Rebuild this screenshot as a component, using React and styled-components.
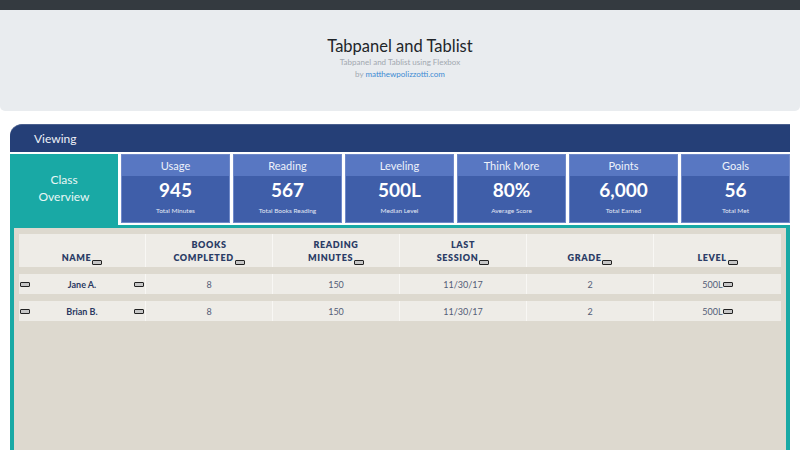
import React from "react";
import styled, { createGlobalStyle } from "styled-components";

const GlobalStyle = createGlobalStyle`
  body {
    margin: 0;
    background: #fff;
    font-family: Lato, "Open Sans", sans-serif;
  }
`;

const TopBar = styled.div`
  height: 10px;
  background: #343a40;
`;

const Jumbo = styled.header`
  background: #e9ecef;
  border-radius: 0 0 5px 5px;
  padding: 26px 0 31px;
  text-align: center;
`;

const Title = styled.h1`
  margin: 0;
  font-size: 16.5px;
  line-height: 20px;
  font-weight: 400;
  color: #212529;
`;

const Lead = styled.p`
  margin: 0;
  font-size: 8px;
  line-height: 12px;
  font-weight: 400;
  color: #a2a8af;
`;

const ByLink = styled.a`
  color: #3d8bd3;
  text-decoration: none;
`;

const Viewer = styled.section`
  margin: 13px 10px 0;
`;

const ViewingBar = styled.div`
  height: 27px;
  line-height: 27px;
  padding-left: 24px;
  background: #253f77;
  border-top: 1px solid #4a5f8e;
  border-top-left-radius: 12px;
  color: #eef1f7;
  font-size: 12px;
`;

const TabList = styled.div`
  display: flex;
  gap: 3px;
  height: 71px;
  margin-top: 2px;
`;

const ActiveTab = styled.div`
  width: 108px;
  background: #19a9a5;
  color: #e9f7f6;
  font-size: 12px;
  line-height: 17px;
  display: flex;
  align-items: center;
  justify-content: center;
  text-align: center;
  padding-bottom: 4px;
  box-sizing: border-box;
`;

const Tile = styled.div`
  flex: 1;
  display: flex;
  flex-direction: column;
  margin-bottom: 2px;
  border: 1px solid #6f89c9;
  background: #3f5ea9;
  color: #fff;
  text-align: center;
`;

const TileHead = styled.div`
  height: 21px;
  line-height: 21px;
  background: #5877c2;
  font-size: 11px;
  color: #eef2fb;
`;

const TileValue = styled.div`
  margin-top: 2px;
  font-size: 19px;
  line-height: 24px;
  font-weight: 700;
`;

const TileCaption = styled.div`
  margin-top: 4px;
  font-size: 6.5px;
  line-height: 10px;
  color: #e3e8f4;
`;

const Panel = styled.div`
  box-sizing: border-box;
  min-height: 226px;
  border: 4px solid #19a9a5;
  border-top-width: 3px;
  border-bottom: 0;
  background: #ddd9cf;
  padding: 6px 5px 0;
`;

const Grid = styled.div`
  display: grid;
  grid-template-columns: repeat(6, 1fr);
  background: #eeece7;
  height: ${(p) => p.$h}px;
  margin-bottom: 7px;
`;

const HeadCell = styled.div`
  display: flex;
  align-items: flex-end;
  justify-content: center;
  padding-bottom: 2px;
  border-right: 1px solid #f8f7f4;
  font-size: 9px;
  line-height: 13px;
  font-weight: 800;
  letter-spacing: 0.6px;
  text-transform: uppercase;
  color: #2b3c66;
  text-align: center;
  &:last-child {
    border-right: none;
  }
`;

const Cell = styled.div`
  display: flex;
  align-items: center;
  justify-content: ${(p) => (p.$spread ? "space-between" : "center")};
  padding: 0 1px;
  border-right: 1px solid #f8f7f4;
  font-size: 9px;
  font-weight: ${(p) => (p.$strong ? 700 : 400)};
  color: ${(p) => (p.$strong ? "#2b3a62" : "#535c77")};
  &:last-child {
    border-right: none;
  }
`;

const Sort = styled.span`
  display: inline-block;
  width: 8px;
  height: 3px;
  border: 1px solid #222;
  border-radius: 1px;
  background: #c6c6c6;
  vertical-align: ${(p) => (p.$low ? "-4px" : "middle")};
  margin-left: ${(p) => (p.$low ? "1px" : "0")};
`;

const stats = [
  { label: "Usage", value: "945", caption: "Total Minutes" },
  { label: "Reading", value: "567", caption: "Total Books Reading" },
  { label: "Leveling", value: "500L", caption: "Median Level" },
  { label: "Think More", value: "80%", caption: "Average Score" },
  { label: "Points", value: "6,000", caption: "Total Earned" },
  { label: "Goals", value: "56", caption: "Total Met" },
];

const columns = [
  ["Name"],
  ["Books", "Completed"],
  ["Reading", "Minutes"],
  ["Last", "Session"],
  ["Grade"],
  ["Level"],
];

const students = [
  { name: "Jane A.", books: 8, minutes: 150, last: "11/30/17", grade: 2, level: "500L" },
  { name: "Brian B.", books: 8, minutes: 150, last: "11/30/17", grade: 2, level: "500L" },
];

const App = () => {
  return (
    <>
      <GlobalStyle />
      <TopBar />
      <Jumbo>
        <Title>Tabpanel and Tablist</Title>
        <Lead>Tabpanel and Tablist using Flexbox</Lead>
        <Lead>
          by <ByLink href="#">matthewpolizzotti.com</ByLink>
        </Lead>
      </Jumbo>
      <Viewer>
        <ViewingBar>Viewing</ViewingBar>
        <TabList>
          <ActiveTab>
            Class
            <br />
            Overview
          </ActiveTab>
          {stats.map((s) => (
            <Tile key={s.label}>
              <TileHead>{s.label}</TileHead>
              <TileValue>{s.value}</TileValue>
              <TileCaption>{s.caption}</TileCaption>
            </Tile>
          ))}
        </TabList>
        <Panel>
          <Grid $h={33}>
            {columns.map((lines) => (
              <HeadCell key={lines.join()}>
                <span>
                  {lines.map((l, i) => (
                    <React.Fragment key={l}>
                      {l}
                      {i === lines.length - 1 ? <Sort $low /> : <br />}
                    </React.Fragment>
                  ))}
                </span>
              </HeadCell>
            ))}
          </Grid>
          {students.map((s) => (
            <Grid $h={20} key={s.name}>
              <Cell $spread $strong>
                <Sort />
                {s.name}
                <Sort />
              </Cell>
              <Cell>{s.books}</Cell>
              <Cell>{s.minutes}</Cell>
              <Cell>{s.last}</Cell>
              <Cell>{s.grade}</Cell>
              <Cell>
                {s.level}
                <Sort />
              </Cell>
            </Grid>
          ))}
        </Panel>
      </Viewer>
    </>
  );
};

export default App;
